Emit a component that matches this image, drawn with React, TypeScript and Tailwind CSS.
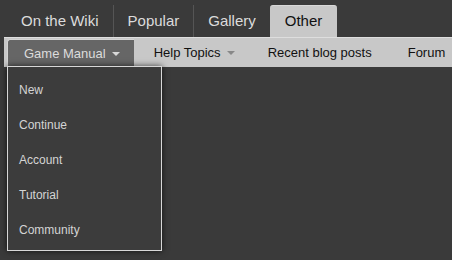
import React from 'react';

const Arrow = ({ color }: { color: string }) => (
  <svg width="8" height="4" viewBox="0 0 8 4" className="ml-[6px] shrink-0">
    <path d="M0 0h8L4 4z" fill={color} />
  </svg>
);

const tabs = ['On the Wiki', 'Popular', 'Gallery'];
const menu = ['New', 'Continue', 'Account', 'Tutorial', 'Community'];

export default function App() {
  return (
    <div
      className="w-[452px] h-[260px] bg-[#3a3a3a] overflow-hidden whitespace-nowrap"
      style={{ fontFamily: '"Liberation Sans", Arial, sans-serif' }}
    >
      {/* Top tabs */}
      <div className="flex pl-[7px] pt-[5px] h-[37px]">
        {tabs.map((t, i) => (
          <div
            key={t}
            className={`shrink-0 flex items-center px-[14px] text-[15px] text-[#dcdcdc] ${i > 0 ? 'border-l border-[#555]' : ''}`}
          >
            {t}
          </div>
        ))}
        <div className="shrink-0 flex items-center px-[15px] text-[15px] text-[#111] bg-[#c8c8c8] rounded-t-[3px] border-t border-[#d8d8d8]">
          Other
        </div>
      </div>

      {/* Sub bar */}
      <div className="relative ml-[4px] h-[30px] bg-[#c8c8c8] border-t border-[#dedede] flex items-end text-[13px] text-[#111]">
        <div className="relative shrink-0 ml-[3px] h-[28px]">
          <div className="h-full flex items-center pl-[16px] pr-[14px] bg-[#666] text-[#dcdcdc] border-l border-t border-[#d4d4d4] rounded-tl-[3px]">
            Game Manual
            <Arrow color="#d8d8d8" />
          </div>
          <div className="absolute left-0 top-[27px] w-[155px] bg-[#3c3c3c] border border-[#d8d8d8] shadow-[0_0_6px_rgba(0,0,0,0.7)] pt-[5px] pb-[3px] z-10">
            {menu.map((m) => (
              <div key={m} className="h-[35px] flex items-center pl-[11px] text-[12px] text-[#d4d4d4]">
                {m}
              </div>
            ))}
          </div>
        </div>
        <div className="shrink-0 h-[28px] flex items-center pl-[20px] pr-[16px]">
          Help Topics
          <Arrow color="#888" />
        </div>
        <div className="shrink-0 h-[28px] flex items-center px-[17px]">Recent blog posts</div>
        <div className="shrink-0 h-[28px] flex items-center px-[19px]">Forum</div>
      </div>
    </div>
  );
}
